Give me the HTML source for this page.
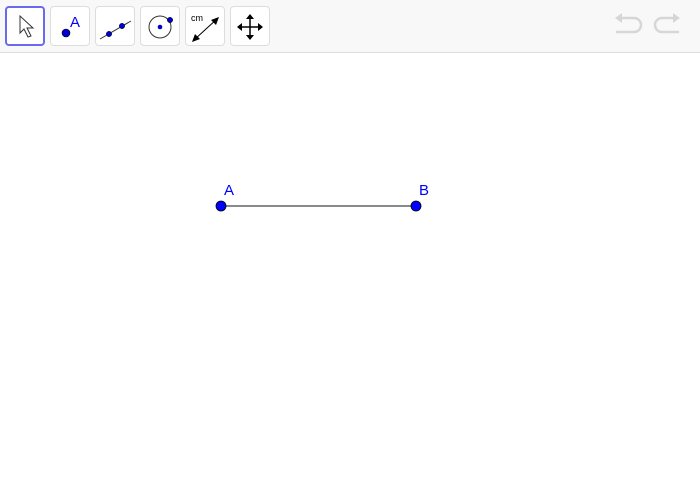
<!DOCTYPE html>
<html><head><style>
body{margin:0;width:700px;height:500px;background:#fff;font-family:"Liberation Sans",sans-serif;overflow:hidden;position:relative}
.tb{position:absolute;left:0;top:0;width:700px;height:52px;background:#f8f8f8;border-bottom:1px solid #ddd}
.b{position:absolute;top:6px;width:38px;height:38px;border:1px solid #ddd;border-radius:4px;background:#fff;box-sizing:border-box}
.b svg{position:absolute;left:0;top:0}
.sel{border:2px solid #6a6af0}
</style></head><body>
<div class="tb">
<div class="b sel" style="left:5px;width:40px;height:40px"><svg width="36" height="36"><path d="M13 8 L13 25 L17 21 L21 29 L24 28 L20 20 L26 20 Z" fill="#fff" stroke="#333" stroke-width="1"/></svg></div>
<div class="b" style="left:50px;width:40px;height:40px"><svg width="40" height="40"><circle cx="15" cy="26" r="4" fill="#00c" stroke="#000" stroke-width=".6"/><text x="19" y="20" font-size="15" fill="#00f" font-family="Liberation Sans">A</text></svg></div>
<div class="b" style="left:95px;width:40px;height:40px"><svg width="40" height="40"><line x1="4" y1="32" x2="35" y2="14" stroke="#333"/><circle cx="13" cy="27" r="2.7" fill="#00c" stroke="#000" stroke-width=".5"/><circle cx="26" cy="19" r="2.7" fill="#00c" stroke="#000" stroke-width=".5"/></svg></div>
<div class="b" style="left:140px;width:40px;height:40px"><svg width="40" height="40"><circle cx="19" cy="20" r="11" fill="none" stroke="#333"/><circle cx="19" cy="20" r="2.3" fill="#00c"/><circle cx="29" cy="13" r="2.7" fill="#00c" stroke="#000" stroke-width=".5"/></svg></div>
<div class="b" style="left:185px;width:40px;height:40px"><svg width="40" height="40"><text x="5" y="14" font-size="9" fill="#000" font-family="Liberation Sans">cm</text><line x1="8" y1="33" x2="32" y2="11" stroke="#000"/><path d="M33 10 L25 13 L30 18 Z M6 35 L14 32 L9 27 Z" fill="#000"/></svg></div>
<div class="b" style="left:230px;width:40px;height:40px"><svg width="40" height="40"><path d="M19 10 V30 M9 20 H29" stroke="#000" stroke-width="1.5"/><path d="M19 7 L15 12 H23 Z M19 33 L15 28 H23 Z M6 20 L11 16 V24 Z M32 20 L27 16 V24 Z" fill="#000"/></svg></div>
<svg style="position:absolute;left:612px;top:10px" width="70" height="30"><path d="M8 8 H22 A7 7 0 0 1 22 22 H4" fill="none" stroke="#d6d6d6" stroke-width="2.5"/><path d="M3 8 L10 3 V13 Z" fill="#d6d6d6"/><path d="M65 8 H50 A7 7 0 0 0 50 22 H67" fill="none" stroke="#d6d6d6" stroke-width="2.5"/><path d="M68 8 L61 3 V13 Z" fill="#d6d6d6"/></svg>
</div>
<svg style="position:absolute;left:0;top:0" width="700" height="500">
<line x1="221" y1="206" x2="416" y2="206" stroke="#444" stroke-width="1.3"/>
<circle cx="221" cy="206" r="5" fill="#00f" stroke="#000" stroke-width=".8"/>
<circle cx="416" cy="206" r="5" fill="#00f" stroke="#000" stroke-width=".8"/>
<text x="224" y="195" font-size="15" fill="#00f" font-family="Liberation Sans">A</text>
<text x="419" y="195" font-size="15" fill="#00f" font-family="Liberation Sans">B</text>
</svg>
</body></html>
